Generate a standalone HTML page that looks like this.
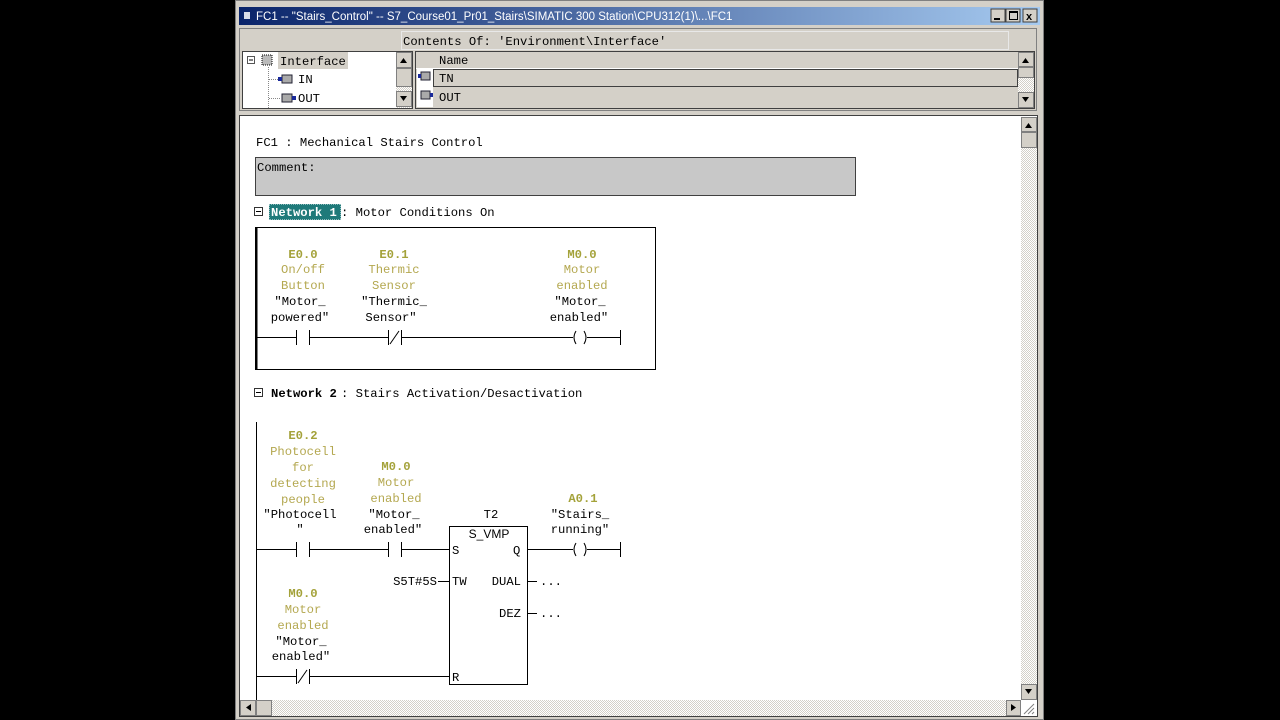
<!DOCTYPE html>
<html><head><meta charset="utf-8"><style>
html,body{margin:0;padding:0;background:#000;width:1280px;height:720px;overflow:hidden}
svg{display:block}
.m{font-family:"Liberation Mono",monospace;font-size:12.2px;fill:#000}
.a{font-family:"Liberation Mono",monospace;font-size:12.2px;font-weight:bold;fill:#a4a23a}
.c{font-family:"Liberation Mono",monospace;font-size:12.2px;fill:#b4a850}
.s{font-family:"Liberation Sans",sans-serif;font-size:12px;fill:#000}
</style></head><body>
<svg width="1280" height="720" viewBox="0 0 1280 720" xmlns="http://www.w3.org/2000/svg">
<defs>
<linearGradient id="tg" x1="0" x2="1"><stop offset="0" stop-color="#0a246a"/><stop offset="1" stop-color="#a6caf0"/></linearGradient>
<pattern id="dit" width="2" height="2" patternUnits="userSpaceOnUse"><rect width="2" height="2" fill="#fff"/><rect width="1" height="1" fill="#d4d0c8"/><rect x="1" y="1" width="1" height="1" fill="#d4d0c8"/></pattern>
</defs>
<rect x="235" y="0" width="809" height="720" fill="#d4d0c8"/>
<rect x="235.5" y="0.5" width="808" height="719" fill="none" stroke="#808080"/>
<rect x="239" y="7" width="801" height="18" fill="url(#tg)"/>
<rect x="244" y="12" width="6" height="7" fill="#fff" opacity=".85"/>
<text x="256" y="20" font-family="Liberation Sans Narrow,Liberation Sans,sans-serif" font-size="11.5" fill="#fff">FC1 -- "Stairs_Control" -- S7_Course01_Pr01_Stairs\SIMATIC 300 Station\CPU312(1)\...\FC1</text>
<g fill="#d4d0c8" stroke="#404040"><rect x="991" y="9" width="14" height="13"/><rect x="1006" y="9" width="14" height="13"/><rect x="1023" y="9" width="14" height="13"/></g>
<rect x="994" y="18" width="6" height="2" fill="#000"/>
<rect x="1009.5" y="11.5" width="8" height="8" fill="none" stroke="#000"/><rect x="1009" y="11" width="9" height="2" fill="#000"/>
<text x="1026" y="20" font-family="Liberation Sans,sans-serif" font-size="11" font-weight="bold">x</text>
<rect x="239.5" y="28.5" width="797" height="82" fill="#d4d0c8" stroke="#808080"/>
<rect x="242" y="31" width="158" height="18" fill="#d4d0c8"/>
<rect x="401.5" y="31.5" width="607" height="18" fill="#d4d0c8" stroke="#e8e8e8"/>
<text x="403" y="45" class="m" font-size="11.5">Contents Of: 'Environment\Interface'</text>
<rect x="242.5" y="51.5" width="170" height="57" fill="#fff" stroke="#404040"/>
<rect x="278" y="52" width="70" height="17" fill="#d4d0c8"/>
<rect x="247.5" y="56.5" width="7" height="7" fill="#fff" stroke="#555"/><line x1="249" y1="60" x2="253" y2="60" stroke="#000"/>
<rect x="262" y="55" width="10" height="10" fill="#bbb" stroke="#000" stroke-dasharray="1 1"/>
<text x="280" y="65" class="m">Interface</text>
<line x1="268.5" y1="67" x2="268.5" y2="108" stroke="#888" stroke-dasharray="1 1"/>
<line x1="269" y1="79.5" x2="280" y2="79.5" stroke="#888" stroke-dasharray="1 1"/>
<line x1="269" y1="98.5" x2="280" y2="98.5" stroke="#888" stroke-dasharray="1 1"/>
<rect x="282" y="75" width="10" height="8" fill="#aaa" stroke="#223"/><rect x="278" y="77" width="4" height="4" fill="#1a2a9a"/>
<rect x="282" y="94" width="10" height="8" fill="#aaa" stroke="#223"/><rect x="292" y="96" width="4" height="4" fill="#1a2a9a"/>
<text x="298" y="83" class="m" font-size="11">IN</text>
<text x="298" y="102" class="m" font-size="11">OUT</text>
<rect x="396" y="52" width="16" height="56" fill="url(#dit)"/>
<rect x="396.5" y="52.5" width="15" height="15" fill="#d4d0c8" stroke="#808080"/><path d="M400 63h7l-3.5-5z" fill="#000"/>
<rect x="396.5" y="68.5" width="15" height="18" fill="#d4d0c8" stroke="#808080"/>
<rect x="396.5" y="91.5" width="15" height="15" fill="#d4d0c8" stroke="#808080"/><path d="M400 96h7l-3.5 5z" fill="#000"/>
<rect x="415.5" y="51.5" width="619" height="57" fill="#d4d0c8" stroke="#404040"/>
<line x1="416" y1="68.5" x2="1018" y2="68.5" stroke="#fff"/>
<text x="439" y="64" class="m" font-size="11.5">Name</text>
<rect x="417" y="69" width="16" height="38" fill="#fff"/>
<rect x="433.5" y="69.5" width="584" height="17" fill="#d4d0c8" stroke="#404040"/>
<rect x="421" y="72" width="9" height="8" fill="#aaa" stroke="#223"/><rect x="418" y="74" width="3" height="4" fill="#1a2a9a"/>
<rect x="421" y="91" width="9" height="8" fill="#aaa" stroke="#223"/><rect x="430" y="93" width="3" height="4" fill="#1a2a9a"/>
<text x="439" y="82" class="m" font-size="11">TN</text>
<text x="439" y="101" class="m" font-size="11">OUT</text>
<rect x="1018" y="52" width="16" height="56" fill="url(#dit)"/>
<rect x="1018.5" y="52.5" width="15" height="14" fill="#d4d0c8" stroke="#808080"/><path d="M1022 63h7l-3.5-5z" fill="#000"/>
<rect x="1018.5" y="67.5" width="15" height="10" fill="#d4d0c8" stroke="#808080"/>
<rect x="1018.5" y="92.5" width="15" height="15" fill="#d4d0c8" stroke="#808080"/><path d="M1022 97h7l-3.5 5z" fill="#000"/>
<rect x="239.5" y="115.5" width="798" height="601" fill="#fff" stroke="#404040"/>
<rect x="1021" y="117" width="16" height="583" fill="url(#dit)"/>
<rect x="1021.5" y="117.5" width="15" height="14" fill="#d4d0c8" stroke="#808080"/><path d="M1025 128h7l-3.5-5z" fill="#000"/>
<rect x="1021.5" y="132.5" width="15" height="15" fill="#d4d0c8" stroke="#808080"/>
<rect x="1021.5" y="684.5" width="15" height="15" fill="#d4d0c8" stroke="#808080"/><path d="M1025 689h7l-3.5 5z" fill="#000"/>
<rect x="240" y="700" width="781" height="16" fill="url(#dit)"/>
<rect x="240.5" y="700.5" width="15" height="15" fill="#d4d0c8" stroke="#808080"/><path d="M251 704v7l-5-3.5z" fill="#000"/>
<rect x="256.5" y="700.5" width="15" height="15" fill="#d4d0c8" stroke="#808080"/>
<rect x="1006.5" y="700.5" width="14" height="15" fill="#d4d0c8" stroke="#808080"/><path d="M1011 704v7l5-3.5z" fill="#000"/>
<path d="M1024 714l10-10M1028 714l6-6M1032 714l2-2" stroke="#808080"/>

<text x="256" y="146" class="m">FC1 : Mechanical Stairs Control</text>
<rect x="255.5" y="157.5" width="600" height="38" fill="#c8c8c8" stroke="#404040"/>
<text x="257" y="171" class="m">Comment:</text>
<rect x="254.5" y="207.5" width="8" height="8" fill="#fff" stroke="#333"/><line x1="256" y1="211.5" x2="261" y2="211.5" stroke="#000"/>
<rect x="269" y="204" width="72" height="16" fill="#1f7a7a" stroke="#fff" stroke-dasharray="1 1"/>
<text x="271" y="216" class="m" font-weight="bold" style="fill:#fff">Network 1</text>
<text x="341" y="216" class="m">: Motor Conditions On</text>

<rect x="255.5" y="227.5" width="400" height="142" fill="none" stroke="#000"/>
<line x1="256.5" y1="228" x2="256.5" y2="369" stroke="#000" stroke-width="2"/>
<g text-anchor="middle">
<text x="303" y="258" class="a">E0.0</text><text x="303" y="273" class="c">On/off</text><text x="303" y="289" class="c">Button</text>
<text x="300" y="305" class="m">"Motor_</text><text x="300" y="321" class="m">powered"</text>
<text x="394" y="258" class="a">E0.1</text><text x="394" y="273" class="c">Thermic</text><text x="394" y="289" class="c">Sensor</text>
<text x="394" y="305" class="m">"Thermic_</text><text x="391" y="321" class="m">Sensor"</text>
<text x="582" y="258" class="a">M0.0</text><text x="582" y="273" class="c">Motor</text><text x="582" y="289" class="c">enabled</text>
<text x="580" y="305" class="m">"Motor_</text><text x="579" y="321" class="m">enabled"</text>
</g>
<g stroke="#000" fill="none">
<path d="M256 337.5H296M309 337.5H388M401 337.5H573M587 337.5H620"/>
<path d="M296.5 330v15M309.5 330v15M388.5 330v15M401.5 330v15M390 344l9-13M620.5 330v15"/>
<path d="M576 331q-4 6.5 0 13M584 331q4 6.5 0 13"/>
</g>

<rect x="254.5" y="388.5" width="8" height="8" fill="#fff" stroke="#333"/><line x1="256" y1="392.5" x2="261" y2="392.5" stroke="#000"/>
<text x="271" y="397" class="m" font-weight="bold">Network 2</text>
<text x="341" y="397" class="m">: Stairs Activation/Desactivation</text>

<line x1="256.5" y1="422" x2="256.5" y2="700" stroke="#000"/>
<g text-anchor="middle">
<text x="303" y="439" class="a">E0.2</text><text x="303" y="455" class="c">Photocell</text><text x="303" y="471" class="c">for</text><text x="303" y="487" class="c">detecting</text><text x="303" y="503" class="c">people</text>
<text x="300" y="518" class="m">"Photocell</text><text x="300" y="533" class="m">"</text>
<text x="396" y="470" class="a">M0.0</text><text x="396" y="486" class="c">Motor</text><text x="396" y="502" class="c">enabled</text>
<text x="394" y="518" class="m">"Motor_</text><text x="393" y="533" class="m">enabled"</text>
<text x="583" y="502" class="a">A0.1</text>
<text x="580" y="518" class="m">"Stairs_</text><text x="580" y="533" class="m">running"</text>
<text x="491" y="518" class="m">T2</text>
<text x="489" y="538" class="s">S_VMP</text>
<text x="303" y="597" class="a">M0.0</text><text x="303" y="613" class="c">Motor</text><text x="303" y="629" class="c">enabled</text>
<text x="301" y="645" class="m">"Motor_</text><text x="301" y="660" class="m">enabled"</text>
</g>
<rect x="449.5" y="526.5" width="78" height="158" fill="none" stroke="#000"/>
<text x="452" y="554" class="m">S</text><text x="513" y="554" class="m">Q</text>
<text x="452" y="585" class="m">TW</text><text x="437" y="585" class="m" text-anchor="end">S5T#5S</text>
<text x="521" y="585" class="m" text-anchor="end">DUAL</text><text x="540" y="585" class="m">...</text>
<text x="521" y="617" class="m" text-anchor="end">DEZ</text><text x="540" y="617" class="m">...</text>
<text x="452" y="681" class="m">R</text>
<g stroke="#000" fill="none">
<path d="M256 549.5H296M309 549.5H388M401 549.5H449M527 549.5H573M587 549.5H620"/>
<path d="M296.5 542v15M309.5 542v15M388.5 542v15M401.5 542v15M620.5 542v15"/>
<path d="M576 543q-4 6.5 0 13M584 543q4 6.5 0 13"/>
<path d="M438 581.5H449M527 581.5H537M527 613.5H537"/>
<path d="M256 676.5H296M309 676.5H449M296.5 669v15M309.5 669v15M298 683l9-13"/>
</g>
</svg>
</body></html>
